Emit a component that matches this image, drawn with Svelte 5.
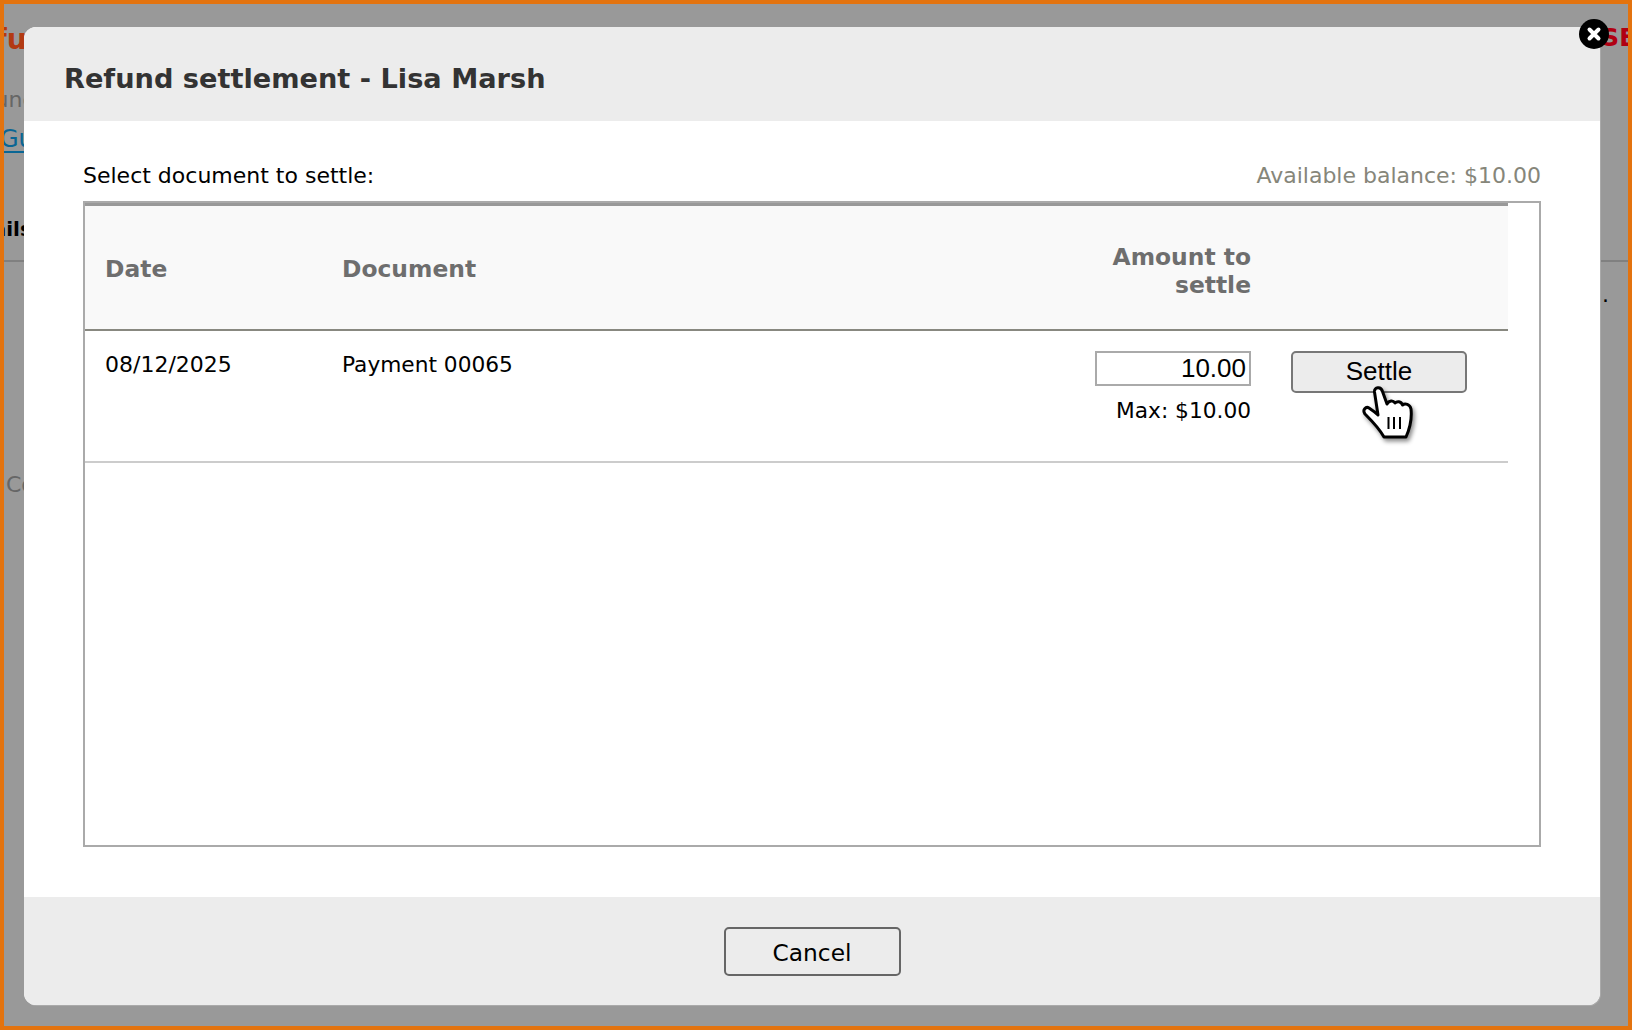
<script>
  const rows = [
    { date: "08/12/2025", doc: "Payment 00065", amount: "10.00", max: "$10.00" },
  ];
</script>

<div class="page">
  <div class="underlay">
    <div class="top">
      <span class="title-behind">Refund details</span>
      <span class="badge-behind">NOT SEEN</span>
    </div>
    <div class="sub">Refund</div>
    <a class="guide" href="#guide">Guide</a>
    <div class="details">Details:</div>
    <div class="dot">.</div>
    <div class="more">Contact</div>
  </div>

  <div class="modal">
    <header>
      <h2>Refund settlement - Lisa Marsh</h2>
    </header>

    <div class="body">
      <div class="caption">
        <span>Select document to settle:</span>
        <span class="balance">Available balance: $10.00</span>
      </div>

      <div class="list">
        <table>
          <colgroup>
            <col class="c-date" />
            <col />
            <col class="c-amount" />
            <col class="c-action" />
          </colgroup>
          <thead>
            <tr>
              <th>Date</th>
              <th>Document</th>
              <th class="right">Amount to<br />settle</th>
              <th></th>
            </tr>
          </thead>
          <tbody>
            {#each rows as row}
              <tr>
                <td class="date">{row.date}</td>
                <td>{row.doc}</td>
                <td class="right">
                  <input type="text" value={row.amount} />
                  <div class="max">Max: {row.max}</div>
                </td>
                <td>
                  <button class="settle">Settle</button>
                </td>
              </tr>
            {/each}
          </tbody>
        </table>
      </div>
    </div>

    <footer>
      <button class="cancel">Cancel</button>
    </footer>

    <button class="close" aria-label="Close">
      <svg width="16" height="16" viewBox="0 0 16 16">
        <path d="M3.5 3.5 L12.5 12.5 M12.5 3.5 L3.5 12.5" stroke="#fff" stroke-width="4" stroke-linecap="round" />
      </svg>
    </button>
  </div>

  <svg class="hand" width="60" height="62" viewBox="0 0 60 62">
    <path
      d="M16.5 8 C16 3 23 2 24.5 7.5 L29 20 C31 16.5 35 16 37 19 C39 17 43 17 44.5 21 C47 19 52 20 53 25 C54 34 52 44 48 53 L26 53 C21 44 14 37 7 30 C4 26 8 22 11 24 C14 26 17 28 20 31 Z"
      fill="#fff"
      stroke="#000"
      stroke-width="3"
      stroke-linejoin="round"
    />
    <path d="M30.5 33 V45 M36 33 V45 M42 33 V45" stroke="#000" stroke-width="2" />
  </svg>
</div>

<style>
  :global(body) {
    margin: 0;
  }

  .page {
    position: relative;
    box-sizing: border-box;
    width: 1632px;
    height: 1030px;
    border: 4px solid #e3730f;
    background: #999;
    overflow: hidden;
    font-family: "DejaVu Sans", Verdana, sans-serif;
  }

  .underlay {
    display: flex;
    flex-direction: column;
    height: 100%;
    color: #555;
  }

  .top {
    display: flex;
    justify-content: space-between;
    align-items: flex-start;
    margin-top: 19px;
    font-size: 24px;
    line-height: 30px;
    font-weight: bold;
  }

  .title-behind {
    margin: 2px 0 0 -50px;
    font-size: 28px;
    color: #b23a12;
  }

  .badge-behind {
    margin-right: -44px;
    color: #b00012;
  }

  .sub {
    margin: 31px 0 0 -45px;
    font-size: 22px;
    line-height: 28px;
    color: #666;
  }

  .guide {
    margin: 10px 0 0 -4px;
    font-size: 24px;
    line-height: 30px;
    color: #0a6694;
    text-underline-offset: 4px;
  }

  .details {
    margin: 61px 0 0 -51px;
    padding-bottom: 17px;
    border-bottom: 2px solid #808080;
    font-size: 20px;
    font-weight: bold;
    line-height: 28px;
    color: #000;
  }

  .dot {
    align-self: flex-end;
    margin: 19px 19px 0 0;
    font-size: 22px;
    line-height: 28px;
    color: #000;
  }

  .more {
    margin: 161px 0 0 2px;
    font-size: 22px;
    line-height: 30px;
    color: #666;
  }

  .modal {
    position: absolute;
    left: 20px;
    top: 23px;
    width: 1576px;
    height: 978px;
    display: flex;
    flex-direction: column;
    background: #fff;
    border-radius: 12px;
    box-shadow: 1px 1px 0 #aaa;
  }

  header {
    flex: none;
    box-sizing: border-box;
    height: 94px;
    display: flex;
    align-items: center;
    padding: 8px 0 0 40px;
    background: #ececec;
    border-radius: 12px 12px 0 0;
  }

  h2 {
    margin: 0;
    font-size: 27.2px;
    font-weight: bold;
    color: #333;
  }

  .body {
    flex: 1;
    display: flex;
    flex-direction: column;
    padding: 41px 59px 50px 59px;
    min-height: 0;
  }

  .caption {
    display: flex;
    justify-content: space-between;
    height: 39px;
    font-size: 22px;
    line-height: 28px;
    color: #000;
  }

  .balance {
    color: #86867a;
  }

  .list {
    flex: 1;
    border: 2px solid #aaa;
    background: #fff;
  }

  table {
    width: 1423px;
    table-layout: fixed;
    border-collapse: collapse;
    font-size: 21.7px;
    color: #000;
  }

  .c-date {
    width: 237px;
  }

  .c-amount {
    width: 300px;
  }

  .c-action {
    width: 257px;
  }

  th {
    height: 125px;
    padding: 3px 0 0 20px;
    box-sizing: border-box;
    border-top: 3px solid #999;
    border-bottom: 2px solid #888880;
    background: #f9f9f9;
    text-align: left;
    font-size: 23.4px;
    line-height: 28px;
    color: #6e6e6e;
  }

  th.right,
  td.right {
    text-align: right;
    padding-right: 0;
  }

  th.right {
    padding-top: 7px;
  }

  td {
    height: 132px;
    padding: 20px 0 0 20px;
    box-sizing: border-box;
    vertical-align: top;
    border-bottom: 2px solid #ccc;
    line-height: 28px;
  }

  td.date {
    font-size: 22px;
  }

  input {
    box-sizing: border-box;
    width: 156px;
    height: 35px;
    padding: 0 3px;
    border: 2px solid #aaa;
    background: #fff;
    text-align: right;
    font-family: "Liberation Sans", Arial, sans-serif;
    font-size: 26px;
    color: #000;
    display: block;
    margin-left: auto;
  }

  .max {
    margin-top: 11px;
  }

  button {
    font-family: inherit;
    cursor: pointer;
  }

  .settle {
    display: block;
    box-sizing: border-box;
    width: 176px;
    height: 42px;
    margin-left: 20px;
    padding: 0;
    border: 2px solid #777;
    border-radius: 5px;
    background: #ececec;
    font-family: "Liberation Sans", Arial, sans-serif;
    font-size: 26px;
    color: #000;
  }

  footer {
    flex: none;
    height: 108px;
    display: flex;
    justify-content: center;
    align-items: flex-start;
    padding-top: 30px;
    box-sizing: border-box;
    background: #ececec;
    border-radius: 0 0 12px 12px;
  }

  .cancel {
    box-sizing: border-box;
    width: 177px;
    height: 49px;
    padding: 2px 0 0;
    border: 2px solid #666;
    border-radius: 5px;
    background: #ececec;
    font-size: 23.3px;
    color: #000;
  }

  .close {
    position: absolute;
    right: -9px;
    top: -8px;
    width: 30px;
    height: 30px;
    padding: 0;
    border: 0;
    border-radius: 50%;
    background: #000;
    display: flex;
    align-items: center;
    justify-content: center;
  }

  .hand {
    position: absolute;
    left: 1354px;
    top: 380px;
    filter: drop-shadow(2px 3px 2px rgba(0, 0, 0, 0.45));
  }
</style>
